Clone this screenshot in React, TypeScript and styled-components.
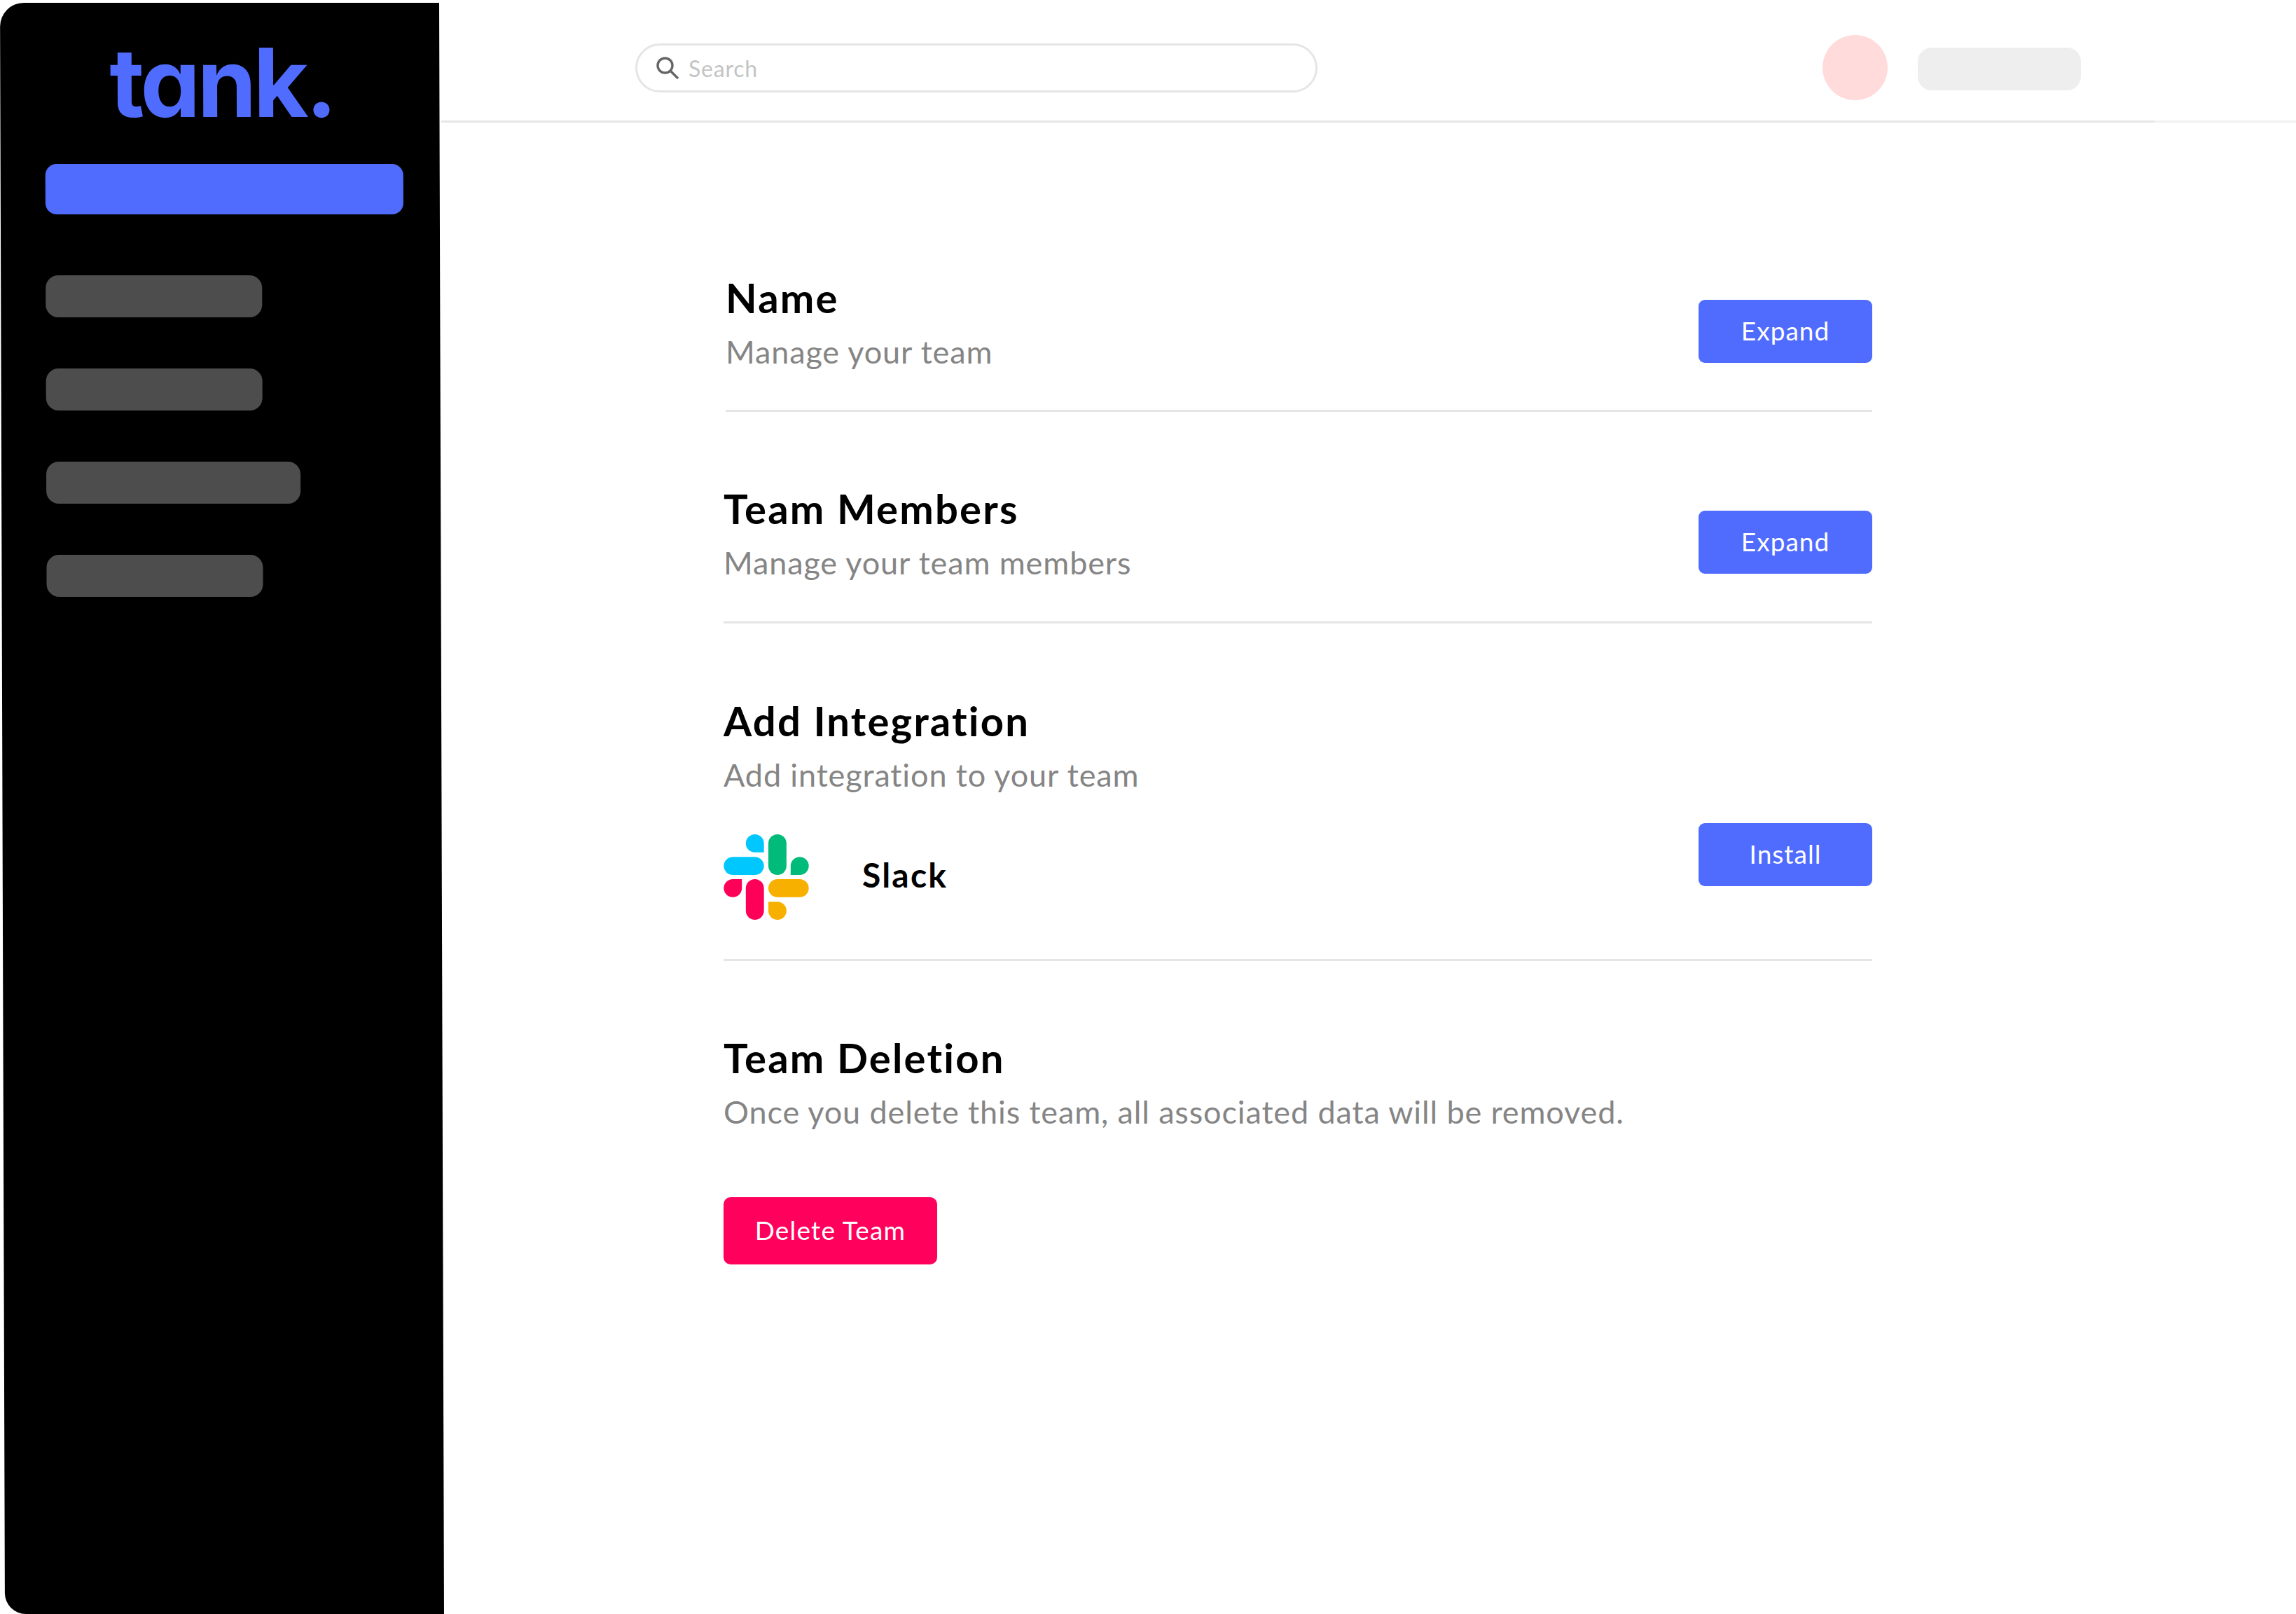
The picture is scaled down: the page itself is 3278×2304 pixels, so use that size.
import React from "react";
import styled, { createGlobalStyle } from "styled-components";

const GlobalStyle = createGlobalStyle`
  html, body, #root {
    margin: 0;
    padding: 0;
    height: 100%;
    background: #ffffff;
  }
  html {
    overflow: hidden;
  }
  body {
    font-family: "Lato", "Liberation Sans", sans-serif;
  }
`;

const Page = styled.div`
  display: flex;
  width: 3278px;
  height: 2304px;
  overflow: hidden;
`;

const Sidebar = styled.aside`
  flex: 0 0 627px;
  margin-top: 4px;
  padding: 0 52px 0 64px;
  box-sizing: border-box;
  display: flex;
  flex-direction: column;
  background: #000000;
  border-radius: 34px 0 0 30px;
  transform: skewX(0.174deg);
  transform-origin: top left;
`;

const Logo = styled.div`
  height: 230px;
  padding-left: 92px;
  font-family: "Inter", sans-serif;
  font-feature-settings: "cv11";
  font-weight: 700;
  font-size: 136px;
  line-height: 228px;
  letter-spacing: -4.5px;
  color: #4f6cff;
`;

const ActiveItem = styled.div`
  height: 72px;
  margin-bottom: 87px;
  background: #4f6cff;
  border-radius: 16px;
`;

const NavItem = styled.div<{ $width: number }>`
  width: ${(p) => p.$width}px;
  height: 60px;
  margin-bottom: 73px;
  background: #4d4d4d;
  border-radius: 18px;
`;

const Main = styled.main`
  flex: 1;
  margin-left: 3px;
  display: flex;
  flex-direction: column;
`;

const Header = styled.header`
  flex: 0 0 172px;
  padding: 50px 307px 0 277px;
  box-sizing: border-box;
  display: flex;
  align-items: flex-start;
  justify-content: space-between;
`;

const HeaderRule = styled.div`
  flex: 0 0 3px;
  background: linear-gradient(to right, #e5e5e5 2446px, #f1f1f1 2446px);
`;

const SearchBox = styled.div`
  width: 974px;
  height: 70px;
  margin-top: 12px;
  padding-left: 26px;
  box-sizing: border-box;
  display: flex;
  align-items: center;
  gap: 13px;
  border: 3px solid #e5e5e5;
  border-radius: 35px;
  font-size: 32px;
  color: #c4c4c4;
  letter-spacing: 0.8px;
`;

const SearchIcon = styled.svg`
  width: 34px;
  height: 34px;
  flex: none;
`;

const UserArea = styled.div`
  display: flex;
  align-items: center;
  gap: 43px;
`;

const Avatar = styled.div`
  width: 93px;
  height: 93px;
  border-radius: 50%;
  background: #ffdbdb;
`;

const UserName = styled.div`
  width: 233px;
  height: 61px;
  margin-top: 4px;
  border-radius: 20px;
  background: #eeeeee;
`;

const Sections = styled.div`
  width: 1640px;
  margin-left: 403px;
  padding-top: 114px;
`;

const Section = styled.section<{ $ruled?: boolean; $inset?: boolean; $top: number; $bottom: number }>`
  margin-left: ${(p) => (p.$inset ? 3 : 0)}px;
  padding: ${(p) => p.$top}px 0 ${(p) => p.$bottom}px;
  border-bottom: 3px solid ${(p) => (p.$ruled ? "#e5e5e5" : "transparent")};
`;

const Row = styled.div`
  display: flex;
  justify-content: space-between;
  align-items: flex-start;
`;

const Title = styled.h2`
  margin: 0 0 12px;
  font-size: 58px;
  line-height: 70px;
  font-weight: 700;
  letter-spacing: 2.2px;
  color: #000000;
`;

const Subtitle = styled.p`
  margin: 0;
  font-size: 45px;
  line-height: 60px;
  letter-spacing: 0.87px;
  color: #858585;
`;

const Button = styled.button<{ $offset?: number }>`
  width: 248px;
  height: 90px;
  margin-top: ${(p) => p.$offset ?? 0}px;
  padding: 0 0 3px;
  border: none;
  border-radius: 9px;
  background: #4f6cff;
  color: #ffffff;
  font-family: inherit;
  font-size: 37px;
  letter-spacing: 1px;
`;

const IntegrationRow = styled(Row)`
  margin-top: 39px;
`;

const Integration = styled.div`
  display: flex;
  align-items: center;
  gap: 76px;
  margin-top: 16px;
`;

const SlackLogo = styled.svg`
  width: 122px;
  height: 122px;
`;

const IntegrationName = styled.span`
  margin-bottom: 7px;
  font-size: 48px;
  font-weight: 700;
  letter-spacing: 2.2px;
  color: #000000;
`;

const DangerButton = styled.button`
  display: block;
  width: 305px;
  height: 96px;
  margin-top: 92px;
  padding: 0 0 3px;
  border: none;
  border-radius: 10px;
  background: #ff005c;
  color: #ffffff;
  font-family: inherit;
  font-size: 37px;
  letter-spacing: 1.2px;
`;

const Slack = () => (
  <SlackLogo viewBox="0 0 366 368">
    <path fill="#00c8ff" d="M173 78H134A39 39 0 1 1 173 39Z" />
    <rect fill="#00c8ff" x="0" y="97" width="173" height="78" rx="39" />
    <rect fill="#00bb7a" x="192" y="0" width="78" height="175" rx="39" />
    <path fill="#00bb7a" d="M288 175V136A39 39 0 1 1 327 175Z" />
    <path fill="#ff0058" d="M78 193V232A39 39 0 1 1 39 193Z" />
    <rect fill="#ff0058" x="95" y="193" width="78" height="175" rx="39" />
    <rect fill="#f8b000" x="192" y="193" width="174" height="78" rx="39" />
    <path fill="#f8b000" d="M192 290H231A39 39 0 1 1 192 329Z" />
  </SlackLogo>
);

export default function App() {
  return (
    <Page>
      <GlobalStyle />
      <Sidebar>
        <Logo>tank.</Logo>
        <ActiveItem />
        <NavItem $width={309} />
        <NavItem $width={309} />
        <NavItem $width={363} />
        <NavItem $width={309} />
      </Sidebar>
      <Main>
        <Header>
          <SearchBox>
            <SearchIcon viewBox="0 0 34 34" fill="none" stroke="#666666" strokeWidth="3.4">
              <circle cx="13.5" cy="13.5" r="10.5" />
              <path d="M21 21l11 11" />
            </SearchIcon>
            Search
          </SearchBox>
          <UserArea>
            <Avatar />
            <UserName />
          </UserArea>
        </Header>
        <HeaderRule />
        <Sections>
          <Section $ruled $inset $top={101} $bottom={53}>
            <Row>
              <div>
                <Title>Name</Title>
                <Subtitle>Manage your team</Subtitle>
              </div>
              <Button $offset={38}>Expand</Button>
            </Row>
          </Section>
          <Section $ruled $top={103} $bottom={54}>
            <Row>
              <div>
                <Title>Team Members</Title>
                <Subtitle>Manage your team members</Subtitle>
              </div>
              <Button $offset={38}>Expand</Button>
            </Row>
          </Section>
          <Section $ruled $top={104} $bottom={56}>
            <Title>Add Integration</Title>
            <Subtitle>Add integration to your team</Subtitle>
            <IntegrationRow>
              <Integration>
                <Slack />
                <IntegrationName>Slack</IntegrationName>
              </Integration>
              <Button>Install</Button>
            </IntegrationRow>
          </Section>
          <Section $top={103} $bottom={0}>
            <Title>Team Deletion</Title>
            <Subtitle>Once you delete this team, all associated data will be removed.</Subtitle>
            <DangerButton>Delete Team</DangerButton>
          </Section>
        </Sections>
      </Main>
    </Page>
  );
}
